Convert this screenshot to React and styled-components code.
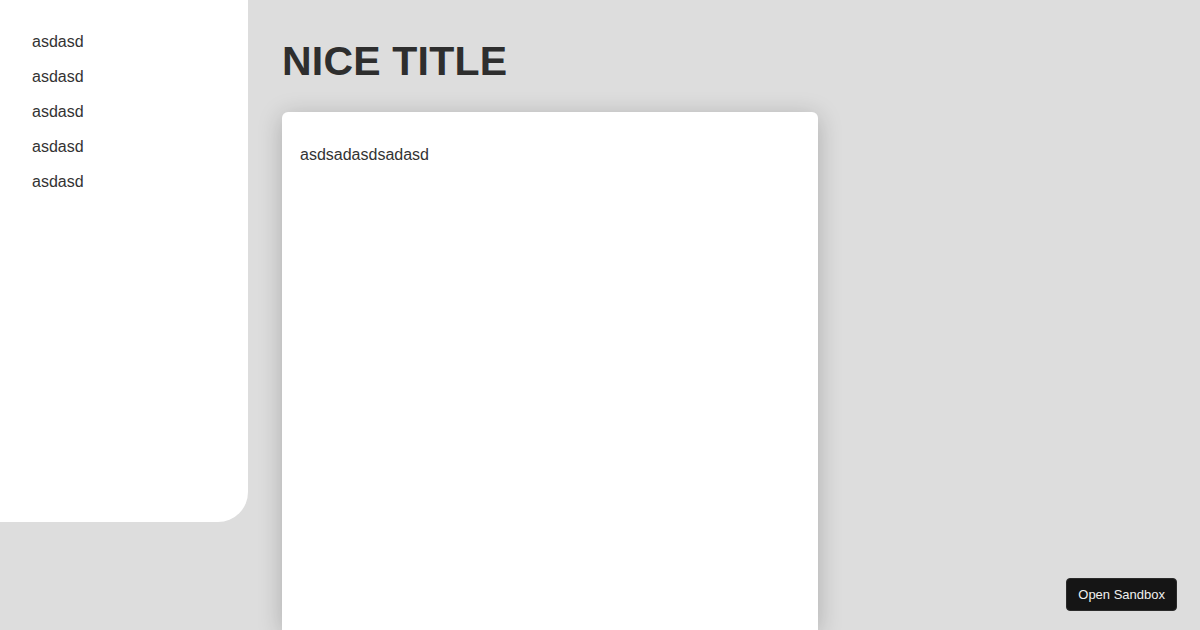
import styled, { createGlobalStyle } from 'styled-components';

const GlobalStyle = createGlobalStyle`
  html, body {
    margin: 0;
    padding: 0;
    height: 100%;
    overflow: hidden;
    background-color: #dddddd;
    font-family: "Liberation Sans", Arial, sans-serif;
    color: #333;
  }
`;

const Layout = styled.div`
  display: flex;
  align-items: flex-start;
  height: 100vh;
`;

const Sidebar = styled.nav`
  width: 248px;
  height: 522px;
  flex-shrink: 0;
  box-sizing: border-box;
  padding: 24px 0 0 32px;
  background-color: #fff;
  border-bottom-right-radius: 30px;
`;

const NavList = styled.ul`
  list-style-type: none;
  margin: 0;
  padding: 0;
`;

const NavItem = styled.li`
  font-size: 16px;
  line-height: 35px;
  color: #333;
`;

const Main = styled.main`
  padding: 38px 0 0 34px;
`;

const Title = styled.h1`
  margin: 0 0 27px;
  font-size: 41px;
  font-weight: 700;
  letter-spacing: 0.2px;
  color: #2e2e2e;
`;

const Card = styled.section`
  width: 536px;
  height: 518px;
  box-sizing: border-box;
  padding: 18px;
  background-color: #fff;
  border-radius: 6px 6px 0 0;
  box-shadow: 0 4px 24px rgba(0, 0, 0, 0.22);
`;

const Text = styled.p`
  margin: 16px 0;
  font-size: 16px;
  color: #333;
`;

const SandboxButton = styled.button`
  position: fixed;
  right: 23px;
  bottom: 19px;
  height: 33px;
  padding: 0 11px;
  border: 1px solid #2a2a2a;
  border-radius: 4px;
  background-color: #151515;
  color: #f0f0f0;
  font-family: "Liberation Sans", Arial, sans-serif;
  font-size: 13px;
  cursor: pointer;
`;

const items = ['asdasd', 'asdasd', 'asdasd', 'asdasd', 'asdasd'];

const App = () => {
  return (
    <>
      <GlobalStyle />
      <Layout>
        <Sidebar>
          <NavList>
            {items.map((item, i) => (
              <NavItem key={i}>{item}</NavItem>
            ))}
          </NavList>
        </Sidebar>
        <Main>
          <Title>NICE TITLE</Title>
          <Card>
            <Text>asdsadasdsadasd</Text>
          </Card>
        </Main>
      </Layout>
      <SandboxButton>Open Sandbox</SandboxButton>
    </>
  );
};

export default App;
